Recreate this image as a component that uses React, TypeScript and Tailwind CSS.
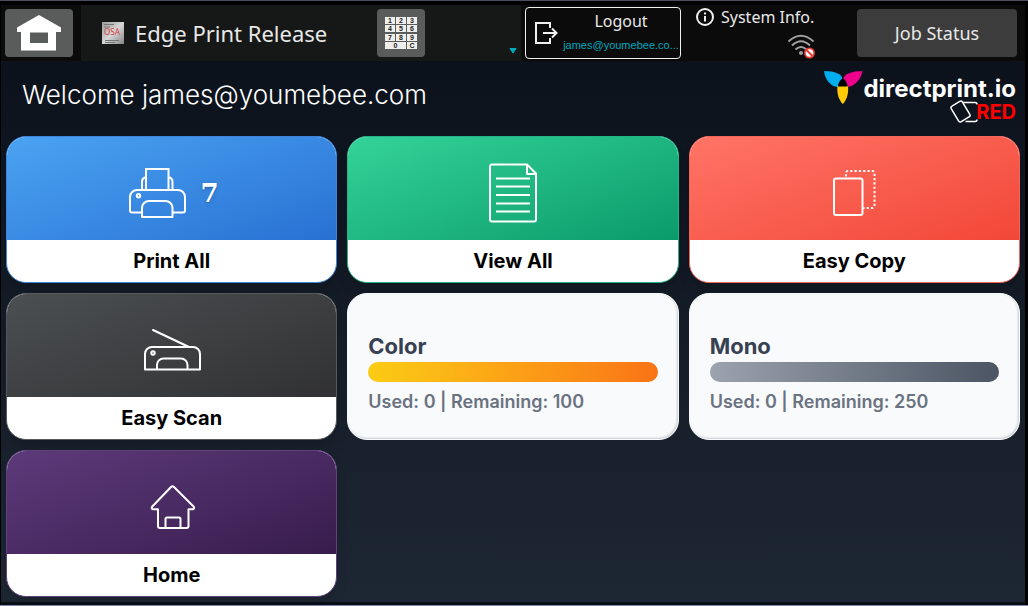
import React from 'react';

type Tile = {
  label: string;
  gradient: string;
  border: string;
  icon: React.ReactNode;
  count?: number;
};

type Quota = {
  name: string;
  bar: string;
  used: number;
  remaining: number;
};

const LineIcon = ({ children }: { children: React.ReactNode }) => (
  <svg
    className="size-16 shrink-0"
    viewBox="0 0 64 64"
    fill="none"
    stroke="#fff"
    strokeWidth="2"
    strokeLinejoin="round"
    aria-hidden="true"
  >
    {children}
  </svg>
);

const PrinterIcon = () => (
  <LineIcon>
    <path d="M21 28V8h22.5v20" strokeLinejoin="miter" />
    <path d="M21 16.5c-2.5 0-4 1.5-4 4.5v7.5M43.5 16.5c2.5 0 4 1.5 4 4.5v7.5" />
    <path d="M17 51.5H7a2 2 0 0 1-2-2V36a7 7 0 0 1 7-7h41a7 7 0 0 1 7 7v13.5a2 2 0 0 1-2 2H47.5" />
    <path d="M17 56V47a7 7 0 0 1 7-7h16.5a7 7 0 0 1 7 7v9z" />
    <circle cx="13.5" cy="34.8" r="1.7" />
  </LineIcon>
);

const DocumentIcon = () => (
  <LineIcon>
    <path d="M46 3.5H11a2 2 0 0 0-2 2v53a2 2 0 0 0 2 2h42a2 2 0 0 0 2-2V12.5z" />
    <path d="M46 3.5v9.5h9" />
    <path d="M15 17.5h34M15 25.5h34M15 34h34M15 42.5h34M15 50.5h34" />
  </LineIcon>
);

const CopyIcon = () => (
  <LineIcon>
    <rect x="12" y="17.5" width="28.5" height="36.5" rx="2" />
    <path d="M24 15.5V12a2 2 0 0 1 2-2h24.5a2 2 0 0 1 2 2v33a2 2 0 0 1-2 2H41" strokeDasharray="2.2 2.1" />
  </LineIcon>
);

const ScannerIcon = () => (
  <LineIcon>
    <path d="M13 12l36 17" strokeLinecap="round" />
    <path d="M5 51.5V36a7 7 0 0 1 7-7h41a7 7 0 0 1 7 7v15.5z" />
    <path d="M17 51.5V47a6.5 6.5 0 0 1 6.5-6.5h17.5a6.5 6.5 0 0 1 6.5 6.5v4.5" />
    <circle cx="13" cy="35" r="1.7" />
  </LineIcon>
);

const HomeIcon = () => (
  <LineIcon>
    <path d="M31 12a2.2 2.2 0 0 1 3 0L53.5 31.5c1.2 1.3.5 2.8-1 2.8H48.5V51a2 2 0 0 1-2 2H20a2 2 0 0 1-2-2V34.3h-4.5c-1.7 0-2.4-1.5-1.2-2.8z" />
    <path d="M25.5 53V44a1.5 1.5 0 0 1 1.5-1.5h12a1.5 1.5 0 0 1 1.5 1.5v9" />
  </LineIcon>
);

const tiles: Tile[] = [
  {
    label: 'Print All',
    gradient: 'bg-linear-[160deg] from-[#4ba3f2] to-[#2871d3]',
    border: 'border-[#3b86dc]',
    icon: <PrinterIcon />,
    count: 7,
  },
  {
    label: 'View All',
    gradient: 'bg-linear-[160deg] from-[#34d399] to-[#0b9b6b]',
    border: 'border-[#22b585]',
    icon: <DocumentIcon />,
  },
  {
    label: 'Easy Copy',
    gradient: 'bg-linear-[160deg] from-[#ff7466] to-[#f24738]',
    border: 'border-[#f5665a]',
    icon: <CopyIcon />,
  },
  {
    label: 'Easy Scan',
    gradient: 'bg-linear-[160deg] from-[#4b4f51] to-[#313133]',
    border: 'border-[#58595b]',
    icon: <ScannerIcon />,
  },
  {
    label: 'Home',
    gradient: 'bg-linear-[160deg] from-[#5d3a7a] to-[#381c4d]',
    border: 'border-[#5f417b]',
    icon: <HomeIcon />,
  },
];

const quotas: Quota[] = [
  { name: 'Color', bar: 'from-[#facc15] to-[#f97316]', used: 0, remaining: 100 },
  { name: 'Mono', bar: 'from-[#9ca3af] to-[#4b5563]', used: 0, remaining: 250 },
];

const keys = ['1', '2', '3', '4', '5', '6', '7', '8', '9', '0', 'C'];

function SystemBar() {
  return (
    <header className="flex h-14 items-stretch bg-[#0b0b0b] font-['Noto_Sans',sans-serif] text-[#e8e8e8]">
      <div className="flex w-20 shrink-0 items-center pl-1">
        <button aria-label="Home" className="flex h-12 w-17 items-center justify-center rounded bg-[#5a5c5b]">
          <svg className="h-9 w-11" viewBox="0 0 44 36" aria-hidden="true">
            <path
              fill="#fff"
              fillRule="evenodd"
              d="M22 0L44 12.5V17H39v18.5H4V17H0V12.5zM13 17.5v10.5h18V17.5z"
            />
          </svg>
        </button>
      </div>

      <div className="flex grow items-center bg-[#161817] pl-5">
        <svg className="size-6 shrink-0" viewBox="0 0 24 24" aria-hidden="true">
          <defs>
            <linearGradient id="paper" x1="0" y1="0" x2="1" y2="1">
              <stop offset="0" stopColor="#9b9b9b" />
              <stop offset="0.5" stopColor="#d6d6d6" />
              <stop offset="1" stopColor="#858585" />
            </linearGradient>
          </defs>
          <rect x="1" y="1" width="22" height="22" fill="url(#paper)" />
          <path d="M3 3.5h10M3 6h6M4 19.5h14M4 21.5h10" stroke="#777" />
          <text x="3" y="14" fontSize="8" fill="#d93a3e" fontFamily="Noto Sans, sans-serif">
            OSA
          </text>
        </svg>
        <h1 className="ml-2.5 w-[242px] shrink-0 text-[22px] leading-8 whitespace-nowrap">Edge Print Release</h1>
        <button
          aria-label="Keypad"
          className="grid size-12 shrink-0 grid-cols-3 gap-px rounded bg-[#5a5c5b] p-2 font-['Liberation_Sans',sans-serif]"
        >
          {keys.map((key) => (
            <span
              key={key}
              className={`flex h-[7px] items-center justify-center bg-[#eeeeec] text-[7px] leading-none font-bold text-[#222] ${
                key === '0' ? 'col-span-2' : ''
              }`}
            >
              {key}
            </span>
          ))}
        </button>
        <svg className="mt-9 mr-1 ml-auto h-1.5 w-2" viewBox="0 0 8 6" aria-hidden="true">
          <path d="M1 0.5h6L4 5z" fill="#00acc1" stroke="#00acc1" />
        </svg>
      </div>

      <div className="flex shrink-0 items-center px-1">
        <button className="flex h-13 w-39 items-center rounded border border-[#f0f0f0] pl-2">
          <svg
            className="h-6 w-6 shrink-0"
            viewBox="0 0 24 24"
            fill="none"
            stroke="#f0f0f0"
            strokeWidth="2"
            aria-hidden="true"
          >
            <path d="M16 7V2H2v20h14v-5M9 12h13M18 7.5l4.5 4.5-4.5 4.5" />
          </svg>
          <span className="flex min-w-0 grow flex-col items-center pl-1 whitespace-nowrap">
            <span className="text-base leading-6">Logout</span>
            <span className="font-['Liberation_Sans',sans-serif] text-[11px] leading-6 text-[#00a8bd]">
              james@youmebee.co...
            </span>
          </span>
        </button>
      </div>

      <div className="flex w-[172px] shrink-0 flex-col items-start pl-2.5">
        <button className="flex items-center gap-1.5 text-base leading-6 whitespace-nowrap">
          <svg className="size-5" viewBox="0 0 20 20" fill="none" stroke="#f0f0f0" strokeWidth="2" aria-hidden="true">
            <circle cx="10" cy="10" r="8" />
            <path d="M10 9v5.5M10 5.5v2" />
          </svg>
          System Info.
        </button>
        <svg className="mt-1 ml-[92px] h-7 w-8" viewBox="0 0 32 28" fill="none" aria-label="Wi-Fi off" role="img">
          <g stroke="#a0a0a0" strokeWidth="2">
            <path d="M1.5 8.5Q14 -3 26.5 8.5" />
            <path d="M5 12.5Q14 4 23 12.5" />
            <path d="M8.5 16.5Q14 11.5 19.5 16.5" />
          </g>
          <circle cx="14" cy="20" r="2" fill="#a0a0a0" />
          <circle cx="22.5" cy="20" r="5.5" fill="#e53935" />
          <circle cx="22.5" cy="20" r="3.8" fill="#fff" />
          <path d="M19.5 17l6 6" stroke="#e53935" strokeWidth="2" />
        </svg>
      </div>

      <div className="flex shrink-0 items-center pr-2">
        <button className="h-12 w-40 rounded bg-[#3b3c3b] text-lg">Job Status</button>
      </div>
    </header>
  );
}

function Logo() {
  return (
    <div className="flex items-start font-['Inter',sans-serif] font-bold">
      <svg className="h-9 w-10" viewBox="0 0 40 36" aria-hidden="true">
        <path d="M1 0C12 0 19 3 19.5 8L16 16C7 16 2 8 1 0z" fill="#00aeef" />
        <path d="M39.5 0C29 0 21 3 20 8L23 16C32 16 38 8 39.5 0z" fill="#ec008c" />
        <path d="M14.5 15h10.5C26 23 23 30 19.8 33C16.5 30 13.5 23 14.5 15z" fill="#ffcb05" />
        <path d="M19.8 7C22.5 9 24.5 12 24.5 15.5h-9.5C15 12 17 9 19.8 7z" fill="#000" />
      </svg>
      <div className="flex flex-col items-end">
        <span className="pt-1 text-2xl leading-7 text-white">directprint.io</span>
        <span className="-mt-[3px] flex items-center text-xl leading-5 text-[#ff0000]">
          <svg className="h-6 w-7" viewBox="0 0 28 24" fill="none" stroke="#fff" strokeWidth="1.5" aria-hidden="true">
            <path d="M12 2.5h13a2 2 0 0 1 2 2M27 19.5a2 2 0 0 1-2 2H15.5" />
            <rect x="4" y="2.5" width="13" height="18" rx="2" transform="rotate(-31 10.5 11.5)" fill="#0d131d" />
          </svg>
          <span className="-ml-0.5">RED</span>
        </span>
      </div>
    </div>
  );
}

function TileButton({ tile }: { tile: Tile }) {
  return (
    <button
      className={`flex flex-col overflow-hidden rounded-[20px] border bg-white shadow-lg ${tile.border}`}
    >
      <span className={`flex h-[103px] w-full items-center justify-center gap-3 pt-2 ${tile.gradient}`}>
        {tile.icon}
        {tile.count !== undefined && (
          <span className="font-['DejaVu_Serif',serif] text-[26px] leading-8 font-bold text-white text-shadow-md">
            {tile.count}
          </span>
        )}
      </span>
      <span className="w-full py-2 text-xl leading-[26px] font-bold text-black">{tile.label}</span>
    </button>
  );
}

function QuotaCard({ quota }: { quota: Quota }) {
  const total = quota.used + quota.remaining;
  const left = (quota.remaining / total) * 100;

  return (
    <section className="flex flex-col justify-center rounded-[20px] border border-[#f8fafc] bg-[#f8fafc] px-5 pt-3 shadow-[inset_-1px_-1px_2px_#c9cbcf]">
      <h2 className="text-[22px] leading-7 font-bold text-[#374151]">{quota.name}</h2>
      <div className="mt-0.5 h-5 rounded-full bg-[#e5e7eb]">
        <div className={`h-full rounded-full bg-linear-to-r ${quota.bar}`} style={{ width: `${left}%` }} />
      </div>
      <p className="mt-2 text-lg leading-6 font-semibold text-[#6b7280]">
        Used: {quota.used} | Remaining: {quota.remaining}
      </p>
    </section>
  );
}

export default function App() {
  return (
    <div className="flex min-h-screen flex-col border-t border-b border-t-[#4b4f5c] border-b-[#8288a8] bg-black pt-1 pr-[3px] pl-px">
      <SystemBar />
      <main className="grow border-b-3 border-[#0a0e17] bg-linear-to-b from-[#0c121c] to-[#1d2733] px-[5px] pb-[5px] font-['Inter',sans-serif]">
        <div className="flex h-[75px] items-start justify-between pr-1 pl-4">
          <p className="pt-4 text-[26px] leading-9 font-light text-white">Welcome james@youmebee.com</p>
          <div className="pt-2.5">
            <Logo />
          </div>
        </div>
        <div className="grid auto-rows-[147px] grid-cols-3 gap-2.5">
          {tiles.slice(0, 4).map((tile) => (
            <TileButton key={tile.label} tile={tile} />
          ))}
          {quotas.map((quota) => (
            <QuotaCard key={quota.name} quota={quota} />
          ))}
          {tiles.slice(4).map((tile) => (
            <TileButton key={tile.label} tile={tile} />
          ))}
        </div>
      </main>
    </div>
  );
}
